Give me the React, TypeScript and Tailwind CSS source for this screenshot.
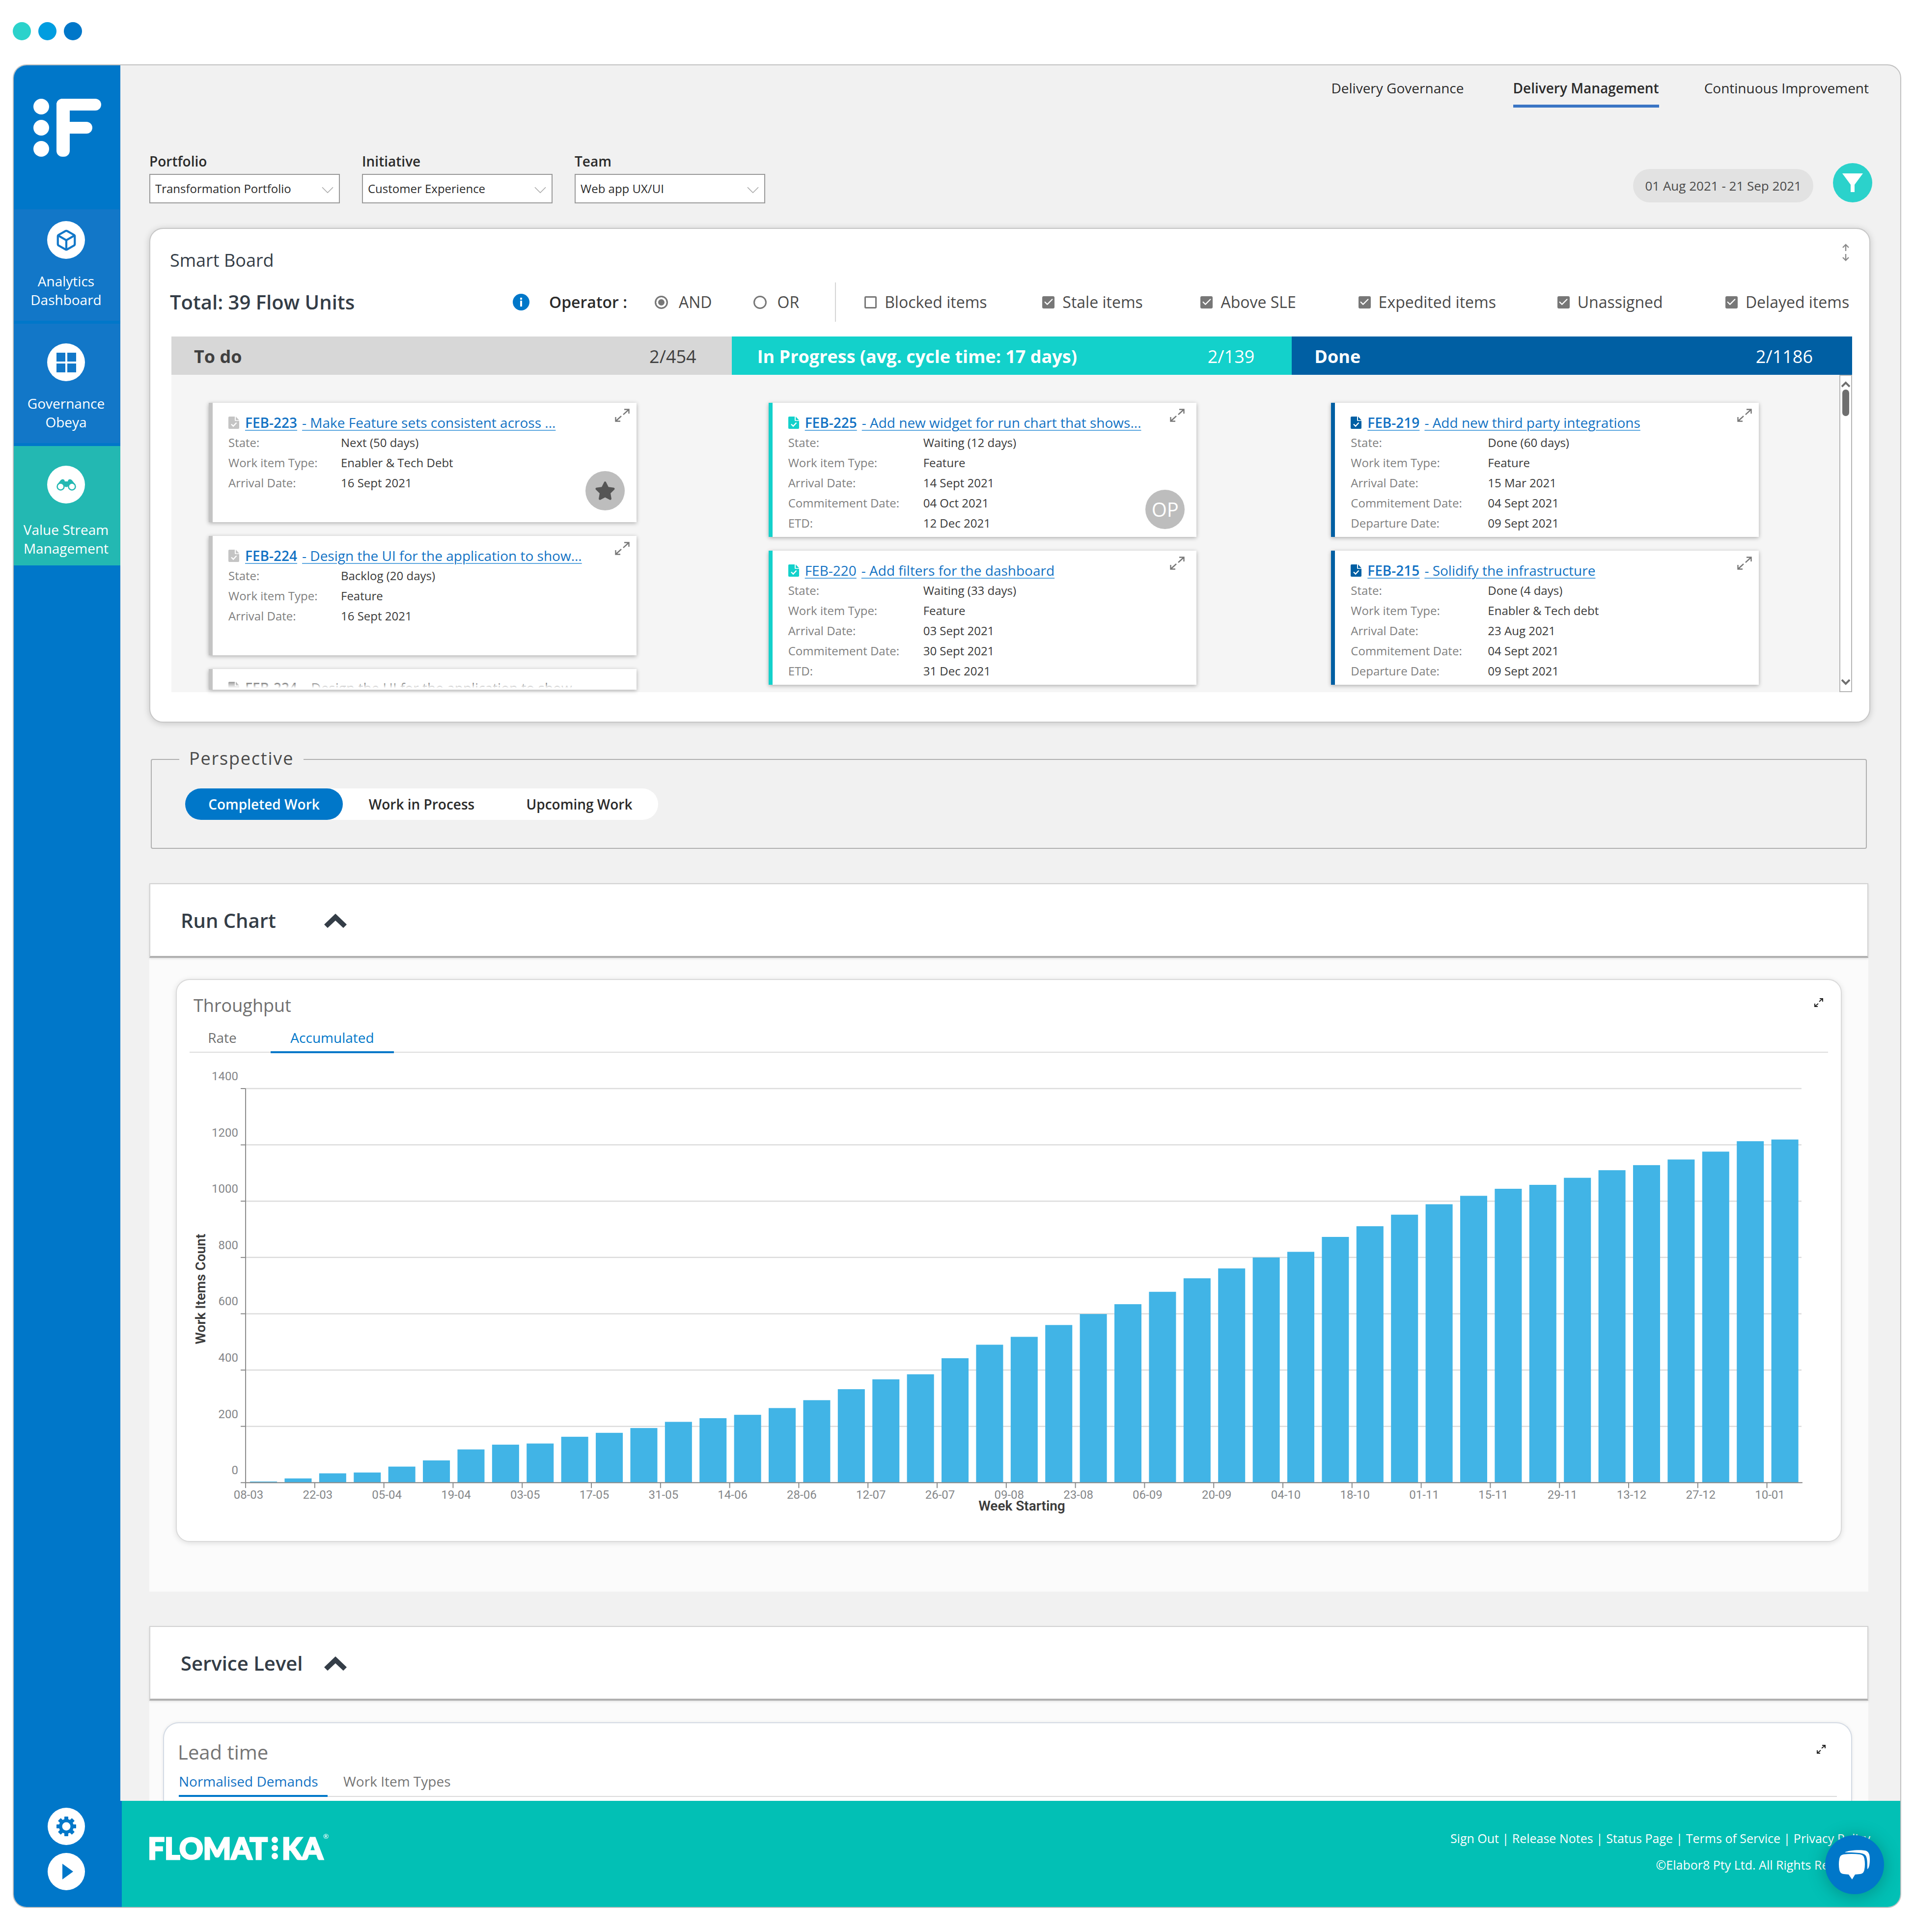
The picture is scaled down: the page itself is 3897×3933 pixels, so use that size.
import { useState } from "react";
import { Box, Check, ChevronDown } from "lucide-react";
import { FaStar } from "react-icons/fa";
import clsx from "clsx";

type Row = [label: string, value: string];

type FlowUnit = {
  id: string;
  title: string;
  light?: boolean;
  badge?: "star" | "OP";
  rows: Row[];
};

const filters = [
  { id: "portfolio", label: "Portfolio", value: "Transformation Portfolio" },
  { id: "initiative", label: "Initiative", value: "Customer Experience" },
  { id: "team", label: "Team", value: "Web app UX/UI" },
];

const flags = [
  { id: "blocked", label: "Blocked items", checked: false },
  { id: "stale", label: "Stale items", checked: true },
  { id: "sle", label: "Above SLE", checked: true },
  { id: "expedited", label: "Expedited items", checked: true },
  { id: "unassigned", label: "Unassigned", checked: true },
  { id: "delayed", label: "Delayed items", checked: true },
];

const todo: FlowUnit[] = [
  {
    id: "FEB-223",
    title: "- Make Feature sets consistent across ...",
    badge: "star",
    rows: [
      ["State:", "Next (50 days)"],
      ["Work item Type:", "Enabler & Tech Debt"],
      ["Arrival Date:", "16 Sept 2021"],
    ],
  },
  {
    id: "FEB-224",
    title: "- Design the UI for the application to show...",
    rows: [
      ["State:", "Backlog (20 days)"],
      ["Work item Type:", "Feature"],
      ["Arrival Date:", "16 Sept 2021"],
    ],
  },
];

const inProgress: FlowUnit[] = [
  {
    id: "FEB-225",
    title: "- Add new widget for run chart that shows...",
    badge: "OP",
    rows: [
      ["State:", "Waiting (12 days)"],
      ["Work item Type:", "Feature"],
      ["Arrival Date:", "14 Sept 2021"],
      ["Commitement Date:", "04 Oct 2021"],
      ["ETD:", "12 Dec 2021"],
    ],
  },
  {
    id: "FEB-220",
    title: "- Add filters for the dashboard",
    light: true,
    rows: [
      ["State:", "Waiting (33 days)"],
      ["Work item Type:", "Feature"],
      ["Arrival Date:", "03 Sept 2021"],
      ["Commitement Date:", "30 Sept 2021"],
      ["ETD:", "31 Dec 2021"],
    ],
  },
];

const done: FlowUnit[] = [
  {
    id: "FEB-219",
    title: "- Add new third party integrations",
    rows: [
      ["State:", "Done (60 days)"],
      ["Work item Type:", "Feature"],
      ["Arrival Date:", "15 Mar 2021"],
      ["Commitement Date:", "04 Sept 2021"],
      ["Departure Date:", "09 Sept 2021"],
    ],
  },
  {
    id: "FEB-215",
    title: "- Solidify the infrastructure",
    rows: [
      ["State:", "Done (4 days)"],
      ["Work item Type:", "Enabler & Tech debt"],
      ["Arrival Date:", "23 Aug 2021"],
      ["Commitement Date:", "04 Sept 2021"],
      ["Departure Date:", "09 Sept 2021"],
    ],
  },
];

const themes = {
  todo: {
    bar: "border-[#c4c4c4]",
    icon: "text-[#c4c4c4]",
    cols: "grid-cols-[229px_1fr]",
    expand: "right-3.5",
  },
  progress: {
    bar: "border-[#13d1cb]",
    icon: "text-[#13d1cb]",
    cols: "grid-cols-[275px_1fr]",
    expand: "right-6",
  },
  done: {
    bar: "border-[#005fa3]",
    icon: "text-[#005fa3]",
    cols: "grid-cols-[279px_1fr]",
    expand: "right-3.5",
  },
};

const throughput = [
  4, 15, 33, 36, 57, 79, 118, 135, 139, 163, 177, 194, 216, 229, 241, 265, 293,
  332, 367, 385, 442, 490, 518, 560, 599, 634, 678, 726, 761, 800, 820, 873,
  911, 952, 989, 1019, 1044, 1058, 1083, 1110, 1128, 1148, 1176, 1213, 1219,
];

const weeks = [
  "08-03", "22-03", "05-04", "19-04", "03-05", "17-05", "31-05", "14-06",
  "28-06", "12-07", "26-07", "09-08", "23-08", "06-09", "20-09", "04-10",
  "18-10", "01-11", "15-11", "29-11", "13-12", "27-12", "10-01",
];

const footerLinks = ["Sign Out", "Release Notes", "Status Page", "Terms of Service", "Privacy Policy"];

function ExpandIcon({ className }: { className?: string }) {
  return (
    <svg viewBox="0 0 30 27" className={className} fill="none" stroke="currentColor" strokeWidth="2.400">
      <path d="M19 1.500h9.500V10M28.500 1.500 17 12M11 25.500H1.500V17M1.500 25.500 13 15" />
    </svg>
  );
}

function SmallExpandIcon() {
  return (
    <svg viewBox="0 0 20 20" className="size-5" fill="none" stroke="#222" strokeWidth="2">
      <path d="M12 2h6v6M18 2l-7 6M8 18H2v-6M2 18l7-6" />
    </svg>
  );
}

function DocIcon({ className }: { className?: string }) {
  return (
    <svg viewBox="0 0 22 25" className={clsx("h-[25px] w-[22px] shrink-0", className)}>
      <path fill="currentColor" d="M2 0h11v7.500q0 1.500 1.500 1.500H22v14q0 2-2 2H2q-2 0-2-2V2Q0 0 2 0Z" />
      <path fill="currentColor" d="M15 0l7 7.500h-7Z" />
      <path fill="none" stroke="#fff" strokeWidth="2.400" d="M6 15.500l4 4 6.500-7" />
    </svg>
  );
}

function GearIcon() {
  return (
    <svg viewBox="0 0 40 40" className="size-10" fill="#0077c9">
      {[0, 45, 90, 135].map((angle) => (
        <rect key={angle} x="16" y="0" width="8" height="40" rx="1" transform={`rotate(${angle} 20 20)`} />
      ))}
      <circle cx="20" cy="20" r="15" />
      <circle cx="20" cy="20" r="8.500" fill="#fff" />
    </svg>
  );
}

function LogoMark() {
  return (
    <svg viewBox="0 0 138 118" className="h-[118px] w-[138px]" fill="#fff">
      <circle cx="16" cy="16" r="16" />
      <circle cx="16" cy="59" r="16" />
      <circle cx="16" cy="102" r="16" />
      <rect x="47" y="0" width="27" height="118" rx="12" />
      <rect x="47" y="0" width="91" height="24" rx="12" />
      <rect x="60" y="47" width="60" height="24" rx="12" />
    </svg>
  );
}

function NavItem({
  icon,
  lines,
  className,
}: {
  icon: React.ReactNode;
  lines: [string, string];
  className: string;
}) {
  return (
    <a href="#" className={clsx("flex flex-col items-center pr-1 text-center text-[28px] leading-[38px] text-white", className)}>
      <span className="grid size-[77px] place-items-center rounded-full bg-white">{icon}</span>
      <span>
        {lines[0]}
        <br />
        {lines[1]}
      </span>
    </a>
  );
}

function Sidebar() {
  return (
    <aside className="flex w-[217px] shrink-0 flex-col bg-[#0077c9] pt-[68px]">
      <a href="#" aria-label="Flomatika" className="mb-[107px] flex justify-center">
        <LogoMark />
      </a>
      <nav className="flex flex-col gap-1.5">
        <NavItem
          className="gap-[26px] bg-[#1277c8] pt-6 pb-6"
          lines={["Analytics", "Dashboard"]}
          icon={<Box size={46} strokeWidth={2.2} className="text-[#1277c8]" />}
        />
        <NavItem
          className="gap-[26px] bg-[#1277c8] pt-10 pb-6"
          lines={["Governance", "Obeya"]}
          icon={
            <svg viewBox="0 0 40 40" className="size-10" fill="#1277c8">
              <path d="M0 0h18v18H0zM22 0h18v18H22zM0 22h18v18H0zM22 22h18v18H22z" />
            </svg>
          }
        />
        <NavItem
          className="gap-[34px] bg-[#23b8b2] pt-10 pb-4"
          lines={["Value Stream", "Management"]}
          icon={
            <svg viewBox="0 0 40 24" className="h-6 w-10" fill="#23b8b2">
              <path d="M1 12 9 2q4-3 7 0l1 3h6l1-3q3-3 7 0l8 10-8-3-6 4q-5 4-10 0L9 9Z" />
              <circle cx="8.500" cy="15.500" r="7" fill="#fff" stroke="#23b8b2" strokeWidth="2.500" />
              <circle cx="31.500" cy="15.500" r="7" fill="#fff" stroke="#23b8b2" strokeWidth="2.500" />
              <circle cx="20" cy="12" r="4.500" />
            </svg>
          }
        />
      </nav>
    </aside>
  );
}

function TopNav() {
  return (
    <nav className="mr-[3px] flex justify-end gap-[92px] pt-7 text-[28px] leading-9 text-[#2b2b2b]">
      <a href="#" className="mr-2 pb-4">
        Delivery Governance
      </a>
      <a href="#" className="border-b-[6px] border-[#3a75c4] pb-4 font-semibold">
        Delivery Management
      </a>
      <a href="#" className="pb-4">
        Continuous Improvement
      </a>
    </nav>
  );
}

function FilterBar() {
  return (
    <div className="-mr-1 mt-[91px] flex items-end justify-between">
      <div className="flex gap-[45px]">
        {filters.map((f) => (
          <div key={f.id} className="flex w-[388px] flex-col gap-2">
            <label htmlFor={f.id} className="text-[28px] leading-9 font-semibold text-[#2b2b2b]">
              {f.label}
            </label>
            <div className="relative">
              <select
                id={f.id}
                className="h-[60px] w-full appearance-none border-2 border-[#999] bg-white px-2.5 text-2xl text-[#2b2b2b]"
              >
                <option>{f.value}</option>
              </select>
              <ChevronDown
                size={42}
                strokeWidth={1}
                className="pointer-events-none absolute top-3 right-1 text-[#aaa]"
              />
            </div>
          </div>
        ))}
      </div>
      <div className="mb-0.5 flex items-end gap-10">
        <button className="h-[68px] rounded-full bg-[#e2e2e2] px-6 text-[26px] text-[#4a4a4a]">
          01 Aug 2021 - 21 Sep 2021
        </button>
        <button aria-label="Filter" className="grid size-20 place-items-center rounded-full bg-[#2bd2cb]">
          <svg viewBox="0 0 42 38" className="h-[38px] w-[42px]" fill="#fff">
            <path d="M0 0h42L25 23v15h-8V23Z" />
          </svg>
        </button>
      </div>
    </div>
  );
}

function FlowCard({ unit, theme }: { unit: FlowUnit; theme: keyof typeof themes }) {
  const t = themes[theme];
  return (
    <article
      className={clsx(
        "relative min-h-[243px] border-l-8 bg-white pt-5 pr-16 pb-2 pl-8 shadow-[0_2px_8px_rgba(0,0,0,0.3)]",
        t.bar
      )}
    >
      <h3 className="flex items-center gap-3 text-[28px] leading-10">
        <DocIcon className={t.icon} />
        <a
          href="#"
          className="flex gap-2.5 whitespace-nowrap text-[#1272c4] underline decoration-[#5fa8e0] decoration-2 underline-offset-4"
        >
          <span className={unit.light ? "" : "font-semibold"}>{unit.id}</span>
          <span>{unit.title}</span>
        </a>
      </h3>
      <dl className="text-2xl leading-[41px]">
        {unit.rows.map(([label, value]) => (
          <div key={label} className={clsx("grid", t.cols)}>
            <dt className="text-[#7f7f7f]">{label}</dt>
            <dd className="text-[#3a3a3a]">{value}</dd>
          </div>
        ))}
      </dl>
      <button aria-label={`Expand ${unit.id}`} className={clsx("absolute top-3 text-[#777]", t.expand)}>
        <ExpandIcon className="h-[27px] w-[30px]" />
      </button>
      {unit.badge && (
        <span
          className={clsx(
            "absolute right-6 grid size-20 place-items-center rounded-full bg-[#bdbdbd] text-[40px] text-white",
            unit.badge === "star" ? "bottom-6" : "bottom-4"
          )}
        >
          {unit.badge === "star" ? <FaStar size={42} color="#555" /> : unit.badge}
        </span>
      )}
    </article>
  );
}

function SmartBoard() {
  return (
    <section className="mt-[50px] rounded-[28px] border-2 border-[#c6c6c6] bg-white pt-[30px] pb-[60px] shadow-[0_2px_14px_rgba(0,0,0,0.18)]">
      <div className="flex items-start justify-between pr-10 pl-10">
        <h2 className="pt-2.5 text-4xl leading-[48px] text-[#343d47]">Smart Board</h2>
        <button aria-label="Resize board">
          <svg viewBox="0 0 16 36" className="h-9 w-4" fill="none" stroke="#8a8a8a" strokeWidth="2.400">
            <path d="M8 15V2M2 8l6-6 6 6M8 21v13M2 28l6 6 6-6" />
          </svg>
        </button>
      </div>

      <div className="mt-[19px] flex h-[82px] items-center pt-0.5 pr-[35px] pl-10 text-[32px] text-[#4a4a4a]">
        <p className="w-[698px] text-[40px] font-semibold text-[#343d47]">Total: 39 Flow Units</p>
        <svg viewBox="0 0 34 34" className="size-[34px]">
          <circle cx="17" cy="17" r="17" fill="#0077c9" />
          <path d="M15 8h4v4h-4zM15 14h4v12h-4z" fill="#fff" />
        </svg>
        <fieldset className="ml-10 flex items-center">
          <legend className="float-left mr-14 font-semibold text-[#2b2b2b]">Operator :</legend>
          <label className="mr-[84px] flex items-center gap-[22px]">
            <input
              type="radio"
              name="operator"
              defaultChecked
              className="size-[27px] appearance-none rounded-full border-3 border-[#777] checked:bg-[#777] checked:shadow-[inset_0_0_0_4px_white]"
            />
            AND
          </label>
          <label className="flex items-center gap-[22px]">
            <input
              type="radio"
              name="operator"
              className="size-[27px] appearance-none rounded-full border-3 border-[#777] checked:bg-[#777] checked:shadow-[inset_0_0_0_4px_white]"
            />
            OR
          </label>
        </fieldset>
        <div className="mr-[58px] ml-[73px] h-full w-0.5 bg-[#d5d5d5]" />
        <div className="grid flex-1 grid-cols-[362fr_322fr_321fr_405fr_342fr_258fr]">
          {flags.map((flag) => (
            <label key={flag.id} className="flex items-center gap-4 whitespace-nowrap">
              <span className="grid place-items-center">
                <input
                  type="checkbox"
                  defaultChecked={flag.checked}
                  className="col-start-1 row-start-1 size-[25px] appearance-none rounded-[3px] border-3 border-[#777] checked:bg-[#777]"
                />
                {flag.checked && (
                  <Check size={22} strokeWidth={2.5} className="pointer-events-none col-start-1 row-start-1 text-white" />
                )}
              </span>
              {flag.label}
            </label>
          ))}
        </div>
      </div>

      <div className="mt-[30px] mr-[35px] ml-[43px]">
        <div className="grid h-[78px] grid-cols-3 text-4xl">
          <div className="flex items-center justify-between bg-[#d7d7d7] pt-1 pr-[72px] pl-[46px] text-[#404040]">
            <h3 className="font-bold">To do</h3>
            <span className="font-medium">2/454</span>
          </div>
          <div className="flex items-center justify-between bg-[#13d1cb] pt-1 pr-[76px] pl-[52px] text-white">
            <h3 className="font-bold">In Progress (avg. cycle time: 17 days)</h3>
            <span className="font-medium">2/139</span>
          </div>
          <div className="flex items-center justify-between bg-[#005fa3] pt-1 pr-[80px] pl-[46px] text-white">
            <h3 className="font-bold">Done</h3>
            <span className="font-medium">2/1186</span>
          </div>
        </div>

        <div className="relative grid grid-cols-3 bg-[#f5f5f5] pt-[57px] pb-[5px]">
          <div className="flex flex-col gap-7 pr-[194px] pl-[76px]">
            {todo.map((u) => (
              <FlowCard key={u.id} unit={u} theme="todo" />
            ))}
            {/* next card peeks in from below the fold */}
            <article className="relative h-[42px] overflow-hidden border-l-8 border-[#c4c4c4] bg-white pt-[18px] pl-8 shadow-[0_2px_8px_rgba(0,0,0,0.3)]">
              <p className="flex items-center gap-3 text-[28px] leading-10 whitespace-nowrap text-[#666]">
                <DocIcon className="text-[#999]" />
                <span className="font-semibold">FEB-224</span>
                <span>- Design the UI for the application to show...</span>
              </p>
              <div className="absolute inset-x-0 bottom-0 h-4 bg-linear-to-b from-transparent to-white to-80%" />
            </article>
          </div>
          <div className="flex flex-col gap-7 self-start pr-[194px] pl-[75px]">
            {inProgress.map((u) => (
              <FlowCard key={u.id} unit={u} theme="progress" />
            ))}
          </div>
          <div className="flex flex-col gap-7 self-start pr-[190px] pl-[80px]">
            {done.map((u) => (
              <FlowCard key={u.id} unit={u} theme="done" />
            ))}
          </div>

          {/* scrollbar */}
          <div className="absolute inset-y-0 right-0 flex w-[26px] flex-col items-center border-2 border-[#b5b5b5] bg-white py-2.5 text-[#6f6f6f]">
            <svg viewBox="0 0 18 18" className="size-[18px]" fill="none" stroke="currentColor" strokeWidth="4">
              <path d="M1 12l8-8 8 8" />
            </svg>
            <div className="h-[54px] w-3.5 rounded-full bg-[#6f6f6f]" />
            <svg viewBox="0 0 18 18" className="mt-auto size-[18px]" fill="none" stroke="currentColor" strokeWidth="4">
              <path d="M1 5l8 8 8-8" />
            </svg>
          </div>
        </div>
      </div>
    </section>
  );
}

function Perspective() {
  const [active, setActive] = useState("Completed Work");
  return (
    <fieldset className="mx-[3px] mt-[55px] rounded-[4px] border-2 border-[#b0b0b0] pt-[39px] pb-[57px] pl-[68px]">
      <legend className="-ml-3 px-5 pb-1 text-4xl leading-9 tracking-wider text-[#4a4a4a]">Perspective</legend>
      <div className="inline-flex h-16 rounded-full bg-white align-top">
        {["Completed Work", "Work in Process", "Upcoming Work"].map((name) => (
          <button
            key={name}
            onClick={() => setActive(name)}
            className={clsx(
              "w-[321px] rounded-full text-[28px] font-semibold",
              active === name ? "bg-[#0077c9] text-white" : "text-[#2b2b2b]"
            )}
          >
            {name}
          </button>
        ))}
      </div>
    </fieldset>
  );
}

function SectionHeader({ title }: { title: string }) {
  return (
    <div className="relative flex items-center border-2 border-b-4 border-[#d2d2d2] border-b-[#b0b0b0] bg-white pt-[46px] pb-11 pl-[62px] leading-[56px] shadow-[0_2px_4px_rgba(0,0,0,0.1)]">
      <h2 className="w-[292px] text-[40px] leading-[56px] font-semibold text-[#343d47]">{title}</h2>
      <button aria-label={`Collapse ${title}`}>
        <svg viewBox="0 0 46 29" className="h-[29px] w-[46px]" fill="#343d47">
          <path d="M23 0 46 22l-7 7-16-15L7 29l-7-7Z" />
        </svg>
      </button>
    </div>
  );
}

// plot area inside the 3387 x 994 view box
const LEFT = 140;
const RIGHT = 3307;
const BASE = 875;
const TOP = 73;
const STEP = (RIGHT - LEFT) / throughput.length;

function ThroughputChart() {
  const y = (v: number) => BASE - (v / 1400) * (BASE - TOP);
  return (
    <svg viewBox="0 0 3387 994" className="block w-full font-[Roboto,sans-serif]" role="img" aria-label="Throughput">
      {[0, 200, 400, 600, 800, 1000, 1200, 1400].map((v) => (
        <g key={v}>
          <path d={`M${LEFT} ${y(v)}H${RIGHT}`} stroke="#dcdcdc" strokeWidth="2.500" />
          <path d={`M${LEFT - 10} ${y(v)}H${LEFT}`} stroke="#8a8a8a" strokeWidth="2" />
          <text x={LEFT - 15} y={y(v) - 17} fontSize="24" textAnchor="end" fill="#85878a">
            {v}
          </text>
        </g>
      ))}
      {throughput.map((v, i) => (
        <rect key={i} x={LEFT + i * STEP + 9} y={y(v)} width="55" height={BASE - y(v)} fill="#41b4e6" />
      ))}
      <path d={`M${LEFT} ${TOP}V${BASE}H${RIGHT + 2}`} fill="none" stroke="#8a8a8a" strokeWidth="2" />
      {weeks.map((w, i) => (
        <g key={w}>
          <path d={`M${LEFT + i * 2 * STEP} ${BASE}v11`} stroke="#8a8a8a" strokeWidth="2" />
          <text x={LEFT + i * 2 * STEP + 6} y={BASE + 33} fontSize="24" textAnchor="middle" fill="#85878a">
            {w}
          </text>
        </g>
      ))}
      <text x="1720" y="932" fontSize="28" fontWeight="600" textAnchor="middle" fill="#3c3c3c">
        Week Starting
      </text>
      <text transform="translate(58 481) rotate(-90)" fontSize="28" fontWeight="600" textAnchor="middle" fill="#3c3c3c">
        Work Items Count
      </text>
    </svg>
  );
}

function RunChart() {
  return (
    <section className="mt-[70px] bg-[#fbfbfb] pb-[101px]">
      <SectionHeader title="Run Chart" />
      <div className="mx-[54px] mt-[43px] rounded-[28px] border-2 border-[#dadada] bg-white pt-7 shadow-[0_2px_12px_rgba(0,0,0,0.12)]">
        <div className="flex items-start justify-between pr-[35px] pl-[34px]">
          <h3 className="text-4xl leading-[48px] text-[#6f6f6f]">Throughput</h3>
          <button aria-label="Expand throughput" className="mt-2">
            <SmallExpandIcon />
          </button>
        </div>
        <div role="tablist" className="mx-[26px] mt-[23px] flex gap-8 border-b-2 border-[#dcdcdc] text-[28px] leading-9">
          <button role="tab" className="-mb-[3px] w-[133px] border-b-4 border-transparent pb-2.5 text-[#6f6f6f]">
            Rate
          </button>
          <button role="tab" className="-mb-[3px] w-[251px] border-b-4 border-[#0077c9] pb-2.5 text-[#0077c9]">
            Accumulated
          </button>
        </div>
        <ThroughputChart />
      </div>
    </section>
  );
}

function ServiceLevel() {
  return (
    <section className="mt-[70px] bg-[#fbfbfb]">
      <SectionHeader title="Service Level" />
      <div className="mt-11 mr-[33px] ml-7 rounded-t-[32px] border-2 border-b-0 border-[#d3dae4] bg-white pt-[35px] pb-2 shadow-[0_0_6px_rgba(0,0,0,0.08)]">
        <div className="flex items-start justify-between pr-[51px] pl-7">
          <h3 className="text-[40px] leading-[48px] text-[#757575]">Lead time</h3>
          <button aria-label="Expand lead time" className="mt-2">
            <SmallExpandIcon />
          </button>
        </div>
        <div role="tablist" className="mr-[29px] ml-[30px] mt-[17px] flex gap-8 border-b-2 border-[#dcdcdc] text-[28px] leading-9">
          <button role="tab" className="-mb-0.5 w-[303px] border-b-4 border-[#0077c9] pb-2.5 text-left text-[#1272c4]">
            Normalised Demands
          </button>
          <button role="tab" className="-mb-0.5 border-b-4 border-transparent pb-2.5 text-[#757575]">
            Work Item Types
          </button>
        </div>
      </div>
    </section>
  );
}

function Footer() {
  return (
    <div className="flex">
      <div className="flex w-[220px] shrink-0 flex-col items-center gap-4 bg-[#0077c9] pt-3.5 pr-1.5">
        <button aria-label="Settings" className="grid size-[76px] place-items-center rounded-full bg-white">
          <GearIcon />
        </button>
        <button aria-label="Play" className="grid size-[76px] place-items-center rounded-full bg-white">
          <svg viewBox="0 0 22 32" className="ml-1.5 h-8 w-[22px]" fill="#0077c9">
            <path d="M0 0l22 16L0 32Z" />
          </svg>
        </button>
      </div>
      <footer className="relative flex flex-1 items-start justify-between bg-[#02c0b5] pr-[61px] pb-[59px] pl-[53px] text-white">
        <div className="mt-[60px] flex items-center font-[Lato,sans-serif] text-[60px] leading-[72px] font-black [-webkit-text-stroke:3px_white]">
          FLOMAT
          <svg viewBox="0 0 13 46" className="mx-2 h-[46px] w-[13px]" fill="#fff">
            <circle cx="6.500" cy="6.500" r="6.500" />
            <circle cx="6.500" cy="23" r="6.500" />
            <circle cx="6.500" cy="39.500" r="6.500" />
          </svg>
          KA
          <span className="self-start text-sm leading-6 font-normal [-webkit-text-stroke:0]">®</span>
        </div>
        <div className="mt-[49px] text-right text-[25px] leading-[54px]">
          <p>
            {footerLinks.map((name, i) => (
              <span key={name}>
                {i > 0 && " | "}
                <a href="#">{name}</a>
              </span>
            ))}
          </p>
          <p>©Elabor8 Pty Ltd. All Rights Reserved.</p>
        </div>
        <button
          aria-label="Open chat"
          className="absolute right-[33px] bottom-[26px] grid size-[120px] place-items-center rounded-full bg-[#0077c9] shadow-[0_4px_36px_rgba(0,0,0,0.25)]"
        >
          <svg viewBox="0 0 64 60" className="h-[60px] w-16" fill="#fff">
            <path d="M12 5C20 0 48-1 56 2c6 3 7 9 7 18 0 10-2 18-5 19 0-14 0-21-3-27C52 6 40 5 12 5Z" />
            <path d="M10 9Q26 7 43 9q8 1 9 9 2 11 0 22-1 8-9 9l-10 1-6 10-7-10-10-1q-8-1-9-9-2-11 0-22 1-8 9-9Z" />
          </svg>
        </button>
      </footer>
    </div>
  );
}

export default function App() {
  return (
    <div className="bg-white px-[26px] pt-[45px] pb-12 font-['Open_Sans',sans-serif]">
      <div className="flex gap-[15px]">
        <span className="size-[37px] rounded-full bg-[#2bd2cb]" />
        <span className="size-[37px] rounded-full bg-[#009de0]" />
        <span className="size-[37px] rounded-full bg-[#0077c9]" />
      </div>

      <div className="mt-[49px] overflow-hidden rounded-[28px] border-2 border-[#c0c0c0] bg-[#f1f1f1]">
        <div className="flex">
          <Sidebar />
          <main className="min-w-0 flex-1 pr-[61px] pl-[59px]">
            <TopNav />
            <FilterBar />
            <SmartBoard />
            <div className="mr-1">
              <Perspective />
              <RunChart />
              <ServiceLevel />
            </div>
          </main>
        </div>
        <Footer />
      </div>
    </div>
  );
}
